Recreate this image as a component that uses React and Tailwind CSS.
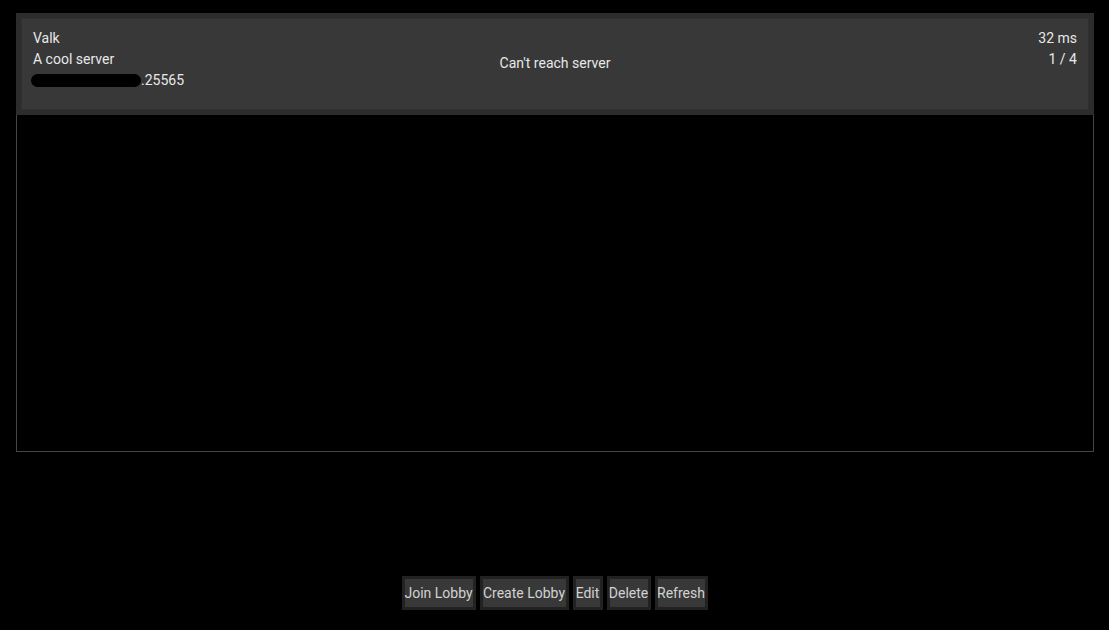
export default function App() {
  const buttons = [
    { label: "Join Lobby", w: "w-[74px]" },
    { label: "Create Lobby", w: "w-[89px]" },
    { label: "Edit", w: "w-[30px]" },
    { label: "Delete", w: "w-[44px]" },
    { label: "Refresh", w: "w-[53px]" },
  ];

  return (
    <div
      className="w-[1109px] h-[630px] bg-black text-[14px] text-[#e8e8e8] flex flex-col"
      style={{ fontFamily: "Roboto, 'Liberation Sans', sans-serif" }}
    >
      {/* Server list */}
      <div className="mt-[13px] ml-[16px] w-[1078px] h-[439px] border border-[#454545] border-t-0">
        <div className="-mx-px border-[5px] border-[#2c2c2c] bg-[#383838] h-[102px] flex items-center px-[12px] relative">
          <div className="absolute inset-0 border border-[#303030] pointer-events-none" />
          <div className="flex-1 self-start pt-[10px] leading-[21px]">
            <div>Valk</div>
            <div>A cool server</div>
            <div className="flex items-center">
              <span className="inline-block w-[110px] h-[13px] bg-black rounded-full -ml-[2px]" />
              <span>.25565</span>
            </div>
          </div>
          <div className="flex-1 text-center -mt-[1px]">Can't reach server</div>
          <div className="flex-1 self-start pt-[10px] leading-[21px] text-right">
            <div>32 ms</div>
            <div>1 / 4</div>
          </div>
        </div>
      </div>

      {/* Actions */}
      <div className="mt-[124px] flex justify-center gap-[4px]">
        {buttons.map((b) => (
          <button
            key={b.label}
            className={`${b.w} h-[34px] border-[3px] border-[#222222] bg-[#383838] text-[#d2d2d2] px-0 leading-[28px] whitespace-nowrap flex justify-center`}
          >
            {b.label}
          </button>
        ))}
      </div>
    </div>
  );
}
